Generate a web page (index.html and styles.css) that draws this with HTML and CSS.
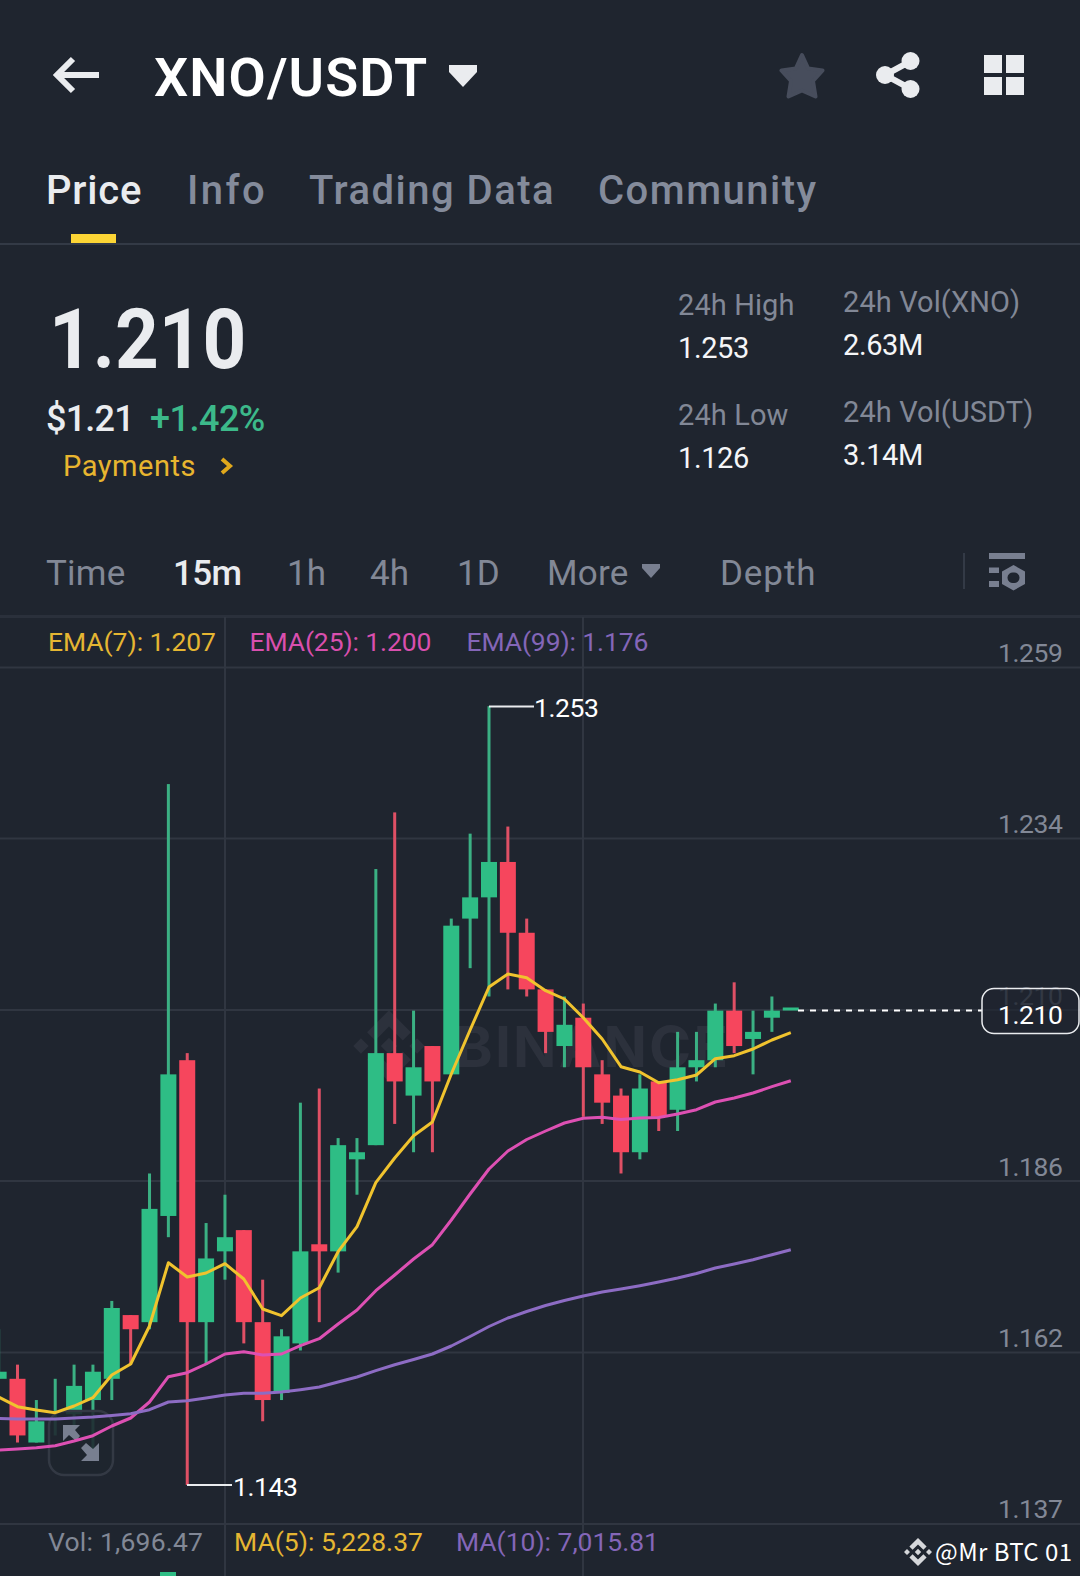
FILE: index.html
```html
<!DOCTYPE html>
<html lang="en">
<head>
<meta charset="utf-8">
<title>XNO/USDT</title>
<link rel="stylesheet" href="styles.css">
</head>
<body>
<header class="topbar">
  <svg class="back" width="46" height="38" viewBox="0 0 46 38"><path d="M20 3L4 19L20 35M4 19H46" fill="none" stroke="#eaecef" stroke-width="6"/></svg>
  <h1 class="pair">XNO/USDT</h1>
  <svg class="caret" width="28" height="22" viewBox="0 0 28 22"><path d="M0 0H28V7L14 22L0 7Z" fill="#eaecef"/></svg>
  <svg class="star" width="46" height="48" viewBox="0 0 46 48"><path d="M23 3L29.2 16.5L43.500 18.500L34 29L36.500 44.500L23 38.500L9.500 44.500L12 29L2.500 18.500L16.800 16.500Z" fill="#474d5c" stroke="#474d5c" stroke-width="4" stroke-linejoin="round"/></svg>
  <svg class="share" width="44" height="46" viewBox="0 0 44 46"><path d="M35 9L9 23L35 37" fill="none" stroke="#eaecef" stroke-width="6"/><circle cx="34.500" cy="9" r="9" fill="#eaecef"/><circle cx="9" cy="23" r="9" fill="#eaecef"/><circle cx="34.500" cy="37" r="9" fill="#eaecef"/></svg>
  <svg class="apps" width="40" height="40" viewBox="0 0 40 40"><path d="M0 0H18V18H0ZM22 0H40V18H22ZM0 22H18V40H0ZM22 22H40V40H22Z" fill="#eaecef"/></svg>
</header>
<nav class="tabs">
  <a class="tab tab-active">Price</a>
  <a class="tab tab-info">Info</a>
  <a class="tab">Trading Data</a>
  <a class="tab">Community</a>
</nav>
<section class="summary">
  <div class="quote">
    <div class="last">1.210</div>
    <div class="change"><span class="usd">$1.21</span><span class="up">+1.42%</span></div>
    <div class="tag">Payments<svg width="14" height="18" viewBox="0 0 14 18"><path d="M2 2L10 9L2 16" fill="none" stroke="#e0a81c" stroke-width="4"/></svg></div>
  </div>
  <dl class="stats stats-price">
    <dt>24h High</dt><dd>1.253</dd>
    <dt>24h Low</dt><dd>1.126</dd>
  </dl>
  <dl class="stats">
    <dt>24h Vol(XNO)</dt><dd>2.63M</dd>
    <dt>24h Vol(USDT)</dt><dd>3.14M</dd>
  </dl>
</section>
<nav class="intervals">
  <a>Time</a>
  <a class="interval-active">15m</a>
  <a>1h</a>
  <a>4h</a>
  <a>1D</a>
  <a>More</a>
  <svg class="more-caret" width="18" height="14" viewBox="0 0 18 14"><path d="M0 0H18V4L9 14L0 4Z" fill="#787f90"/></svg>
  <a class="depth">Depth</a>
  <i class="rule"></i>
  <svg class="settings" width="36" height="38" viewBox="0 0 36 38"><path d="M0 0H36V6H0ZM0 14.500H10V20H0ZM0 28H10V34H0Z" fill="#787f90"/><path fill-rule="evenodd" d="M24.500 12L36 18.500V31L24.500 37.500L13 31V18.500ZM24.500 19.500A5.300 5.300 0 1 0 24.500 30A5.300 5.300 0 1 0 24.500 19.500Z" fill="#787f90"/></svg>
</nav>
<main class="chart">
  <svg id="chart" width="1080" height="961" viewBox="0 615 1080 961"></svg>
</main>
<script src="chart.js"></script>
</body>
</html>
```
FILE: styles.css
```css
* { box-sizing: border-box; }

body {
  margin: 0;
  width: 1080px;
  height: 1576px;
  overflow: hidden;
  background: #1f252f;
  color: #eaecef;
  font-family: Roboto, "Liberation Sans", sans-serif;
}

svg { display: block; flex: none; }

.topbar {
  display: flex;
  align-items: center;
  height: 150px;
  padding-left: 53px;
}
.pair {
  width: 295px;
  margin: 5px 0 0 55px;
  color: #fff;
  font-size: 54px;
  font-weight: 600;
  line-height: 60px;
  letter-spacing: 1.1px;
  white-space: nowrap;
}
.caret { margin-top: 2px; }
.star { margin: 2px 0 0 302px; }
.share { margin-left: 51px; }
.apps { margin-left: 64px; }

.tabs {
  display: grid;
  grid-template-columns: 141px 122px 289px 1fr;
  height: 95px;
  padding-left: 46px;
  border-bottom: 2px solid #333a46;
}
.tab {
  position: relative;
  color: #848b9b;
  font-size: 40px;
  font-weight: 500;
  line-height: 82px;
  letter-spacing: 1.5px;
  white-space: nowrap;
}
.tab-info { letter-spacing: 2.4px; }
.tab-active { color: #eaecef; letter-spacing: .8px; }
.tab-active::after {
  content: "";
  position: absolute;
  left: 25px;
  bottom: 0;
  width: 45px;
  height: 9px;
  background: #fcd535;
}

.summary {
  display: grid;
  grid-template-columns: 632px 165px 1fr;
  height: 281px;
  padding: 36px 0 0 46px;
  white-space: nowrap;
}
.quote { padding-top: 7px; }
.last {
  font-size: 83px;
  font-weight: 700;
  line-height: 104px;
  transform: translateX(3px) scaleX(.92);
  transform-origin: left;
}
.change { display: flex; font-size: 36px; font-weight: 500; line-height: 54px; }
.usd { width: 104px; letter-spacing: -.8px; }
.up { color: #3cb98a; letter-spacing: -.5px; }
.tag {
  display: flex;
  align-items: center;
  gap: 24px;
  padding-left: 17px;
  color: #e8b52f;
  font-size: 29px;
  line-height: 40px;
  letter-spacing: .55px;
}
.stats { margin: 0; font-size: 29px; }
.stats-price { padding-top: 3px; }
.stats dt { color: #828896; line-height: 43px; letter-spacing: .1px; }
.stats dd { margin: 0 0 24px; color: #f5f6f8; line-height: 43px; letter-spacing: -.4px; }

.intervals {
  display: grid;
  grid-template-columns: 127px 114px 83px 87px 90px 95px 78px 243px 26px 1fr;
  align-items: center;
  height: 89px;
  padding: 6px 0 0 46px;
  color: #828896;
  font-size: 35px;
  letter-spacing: .2px;
  white-space: nowrap;
}
.interval-active { color: #eaecef; font-weight: 500; letter-spacing: -.7px; }
.depth { letter-spacing: .9px; }
.more-caret { margin-bottom: 5px; }
.rule { width: 2px; height: 36px; margin-bottom: 6px; background: #333a46; }
.settings { margin-bottom: 4px; }

.chart text { font-size: 26.500px; }
.chart .line { fill: none; stroke-width: 3; stroke-linejoin: round; }
.chart .wordmark { font-family: Inter, sans-serif; font-size: 57px; font-weight: 700; }
.chart .credit { font-family: "Noto Sans CJK SC", sans-serif; font-size: 24px; font-weight: 400; }
```
FILE: chart.js
```js
const GREEN = '#2ebd85', RED = '#f6465d';
const GREEN_WICK = '#3bb083', RED_WICK = '#df5065';
const STEP = 18.86, FIRST_X = -1.36;
const x = i => FIRST_X + i * STEP;
const y = tick => 706.2 + (1253 - tick) * 7.08;

// [rising, body top, body bottom, high, low], prices in thousandths
const candles = [
  [1,1159,1158,1165,1158],[0,1158,1150,1160,1149],[1,1152,1149,1155,1149],[1,1152,1152,1158,1150],
  [1,1157,1153,1160,1151],[1,1159,1155,1160,1148],[1,1168,1158,1169,1155],[0,1167,1165,1167,1160],
  [1,1182,1166,1187,1165],[1,1201,1181,1242,1178],[0,1203,1166,1204,1143],[1,1175,1166,1180,1160],
  [1,1178,1176,1184,1172],[0,1179,1166,1179,1163],[0,1166,1155,1172,1152],[1,1164,1156,1165,1155],
  [1,1176,1163,1197,1162],[0,1177,1176,1199,1166],[1,1191,1176,1192,1173],[1,1190,1189,1192,1184],
  [1,1204,1191,1230,1191],[0,1204,1200,1238,1194],[1,1202,1198,1210,1190],[0,1205,1200,1205,1190],
  [1,1222,1201,1223,1201],[1,1226,1223,1235,1216],[1,1231,1226,1253,1212],[0,1231,1221,1236,1213],
  [0,1221,1213,1223,1212],[0,1213,1207,1213,1204],[1,1208,1205,1212,1202],[0,1209,1202,1211,1195],
  [0,1201,1197,1203,1194],[0,1198,1190,1199,1187],[1,1199,1190,1201,1189],[0,1200,1195,1200,1193],
  [1,1202,1196,1207,1193],[1,1203,1202,1207,1200],[1,1210,1203,1211,1202],[0,1210,1205,1214,1204],
  [1,1207,1206,1210,1201],[1,1210,1209,1212,1207]
];
const ema7 = [1397,1406.7,1410,1412.7,1406,1397.7,1375,1364,1326,1262.7,1277,1273,1263.7,1279,1309,1315.7,1298,1287.7,1251.7,1226.7,1182.7,1158,1135.7,1122,1074,1030,987,974,977.7,990.7,999,1017.7,1039,1066.7,1072,1082.7,1079.7,1075,1058.7,1055.7,1049,1040,1032.7];
const ema25 = [1450,1449,1447.7,1445.7,1441,1435.7,1426,1418,1402,1376.7,1372.7,1364,1354,1351.7,1355,1354,1345.7,1338.7,1324,1310,1290.7,1275,1259,1244.7,1220,1194,1169,1151,1139.5,1131,1123,1118.3,1117.3,1119.5,1118,1117.5,1114,1109.7,1102,1098,1093,1086.7,1080.7];
const ema99 = [1418.5,1419,1419,1419,1418,1417,1415.5,1413.7,1409.7,1402,1400.7,1398,1395,1393.3,1393.3,1392,1389.7,1387,1382,1377,1370.7,1364.7,1359.5,1354,1346,1336.5,1326.5,1318,1311.5,1305.5,1300.5,1296,1292,1289,1285.7,1282,1278,1273.5,1268,1264,1259.7,1254.7,1249.7];

const line = (ys, color) =>
  `<polyline class="line" stroke="${color}" points="${ys.map((v, i) => x(i).toFixed(1) + ',' + v).join(' ')}"/>`;
const label = (str, tx, ty, width, color, extra = '') =>
  `<text x="${tx}" y="${ty}" textLength="${width}" fill="${color}" ${extra}>${str}</text>`;
// Four-chevron diamond mark, 28 units wide, centred on the origin
const mark = (cx, cy, scale, color) =>
  `<path transform="translate(${cx} ${cy}) scale(${scale})" fill="${color}" d="M0-14L8.600-5.400L5.400-2.200L0-7.600L-5.400-2.200L-8.600-5.400ZM0 14L8.600 5.400L5.400 2.200L0 7.600L-5.400 2.200L-8.600 5.400ZM0-3.200L3.200 0L0 3.200L-3.200 0ZM-11-3L-8 0L-11 3L-14 0ZM11-3L14 0L11 3L8 0Z"/>`;

let out = '<rect x="0" y="615" width="1080" height="3" fill="#2a303b"/>';
out += mark(389, 1046, 2.55, '#2c313c') + label('BINANCE', 455, 1067, 273, '#2c313c', 'class="wordmark"');
for (const gy of [667.5, 838.500, 1010, 1181, 1352.500, 1524]) out += `<rect x="0" y="${gy - 1}" width="1080" height="2" fill="#303641"/>`;
for (const gx of [225, 583]) out += `<rect x="${gx - 1}" y="617" width="2" height="959" fill="#303641"/>`;

candles.forEach(([up, top, bottom, high, low], i) => {
  const cx = x(i);
  out += `<rect x="${cx - 1.5}" y="${y(high)}" width="3" height="${y(low) - y(high)}" fill="${up ? GREEN_WICK : RED_WICK}"/>`;
  out += `<rect x="${cx - 8}" y="${y(top)}" width="16" height="${y(bottom) - y(top)}" fill="${up ? GREEN : RED}"/>`;
});
out += `<rect x="${x(42) - 8}" y="1007.5" width="16" height="3" fill="${GREEN}"/>`;
out += `<rect x="160" y="1572" width="16" height="4" fill="${GREEN}"/>`;

out += '<rect x="49" y="1411" width="64" height="64" rx="15" fill="#1f252f" fill-opacity=".88" stroke="#333944" stroke-width="2.500"/>';
out += '<path fill="#787f90" d="M63 1425H80L75 1430L80 1436L76 1441L69 1435L63 1441ZM99 1461H81L87 1455L81 1448L86 1443L93 1449L99 1443Z"/>';
out += line(ema7, '#f0c32e') + line(ema25, '#dd50b3') + line(ema99, '#8d6cc4');

out += '<path d="M489 706.500H534M187 1485H232" stroke="#eaecef" stroke-width="2"/>';
out += label('1.253', 534, 717, 65, '#fff') + label('1.143', 233, 1496, 65, '#fff');
out += label('EMA(7): 1.207', 48, 651, 168, '#e5b632') + label('EMA(25): 1.200', 249.5, 651, 182, '#d94fae') + label('EMA(99): 1.176', 466.5, 651, 182, '#8466b8');
out += label('Vol: 1,696.47', 48, 1551, 155, '#828896') + label('MA(5): 5,228.37', 234, 1551, 189, '#e5b632') + label('MA(10): 7,015.81', 456, 1551, 203, '#8466b8');
[['1.259', 662], ['1.234', 833], ['1.186', 1175.500], ['1.162', 1347], ['1.137', 1518]].forEach(([s, ty]) => out += label(s, 998, ty, 65, '#828896'));
out += label('1.210', 998, 1005, 65, '#5c6270');
out += '<path d="M798 1010.500H982" stroke="#fff" stroke-width="2" stroke-dasharray="6 6"/>';
out += '<rect x="982" y="988.500" width="97" height="45" rx="12" fill="#1f252f" fill-opacity=".68" stroke="#eaecef" stroke-width="1.500"/>';
out += label('1.210', 998, 1024, 65, '#fff');
out += mark(918, 1552, 1, '#d5d7da') + label('@Mr BTC 01', 935, 1561, 137, '#fff', 'class="credit"');
document.getElementById('chart').innerHTML = out;
```
